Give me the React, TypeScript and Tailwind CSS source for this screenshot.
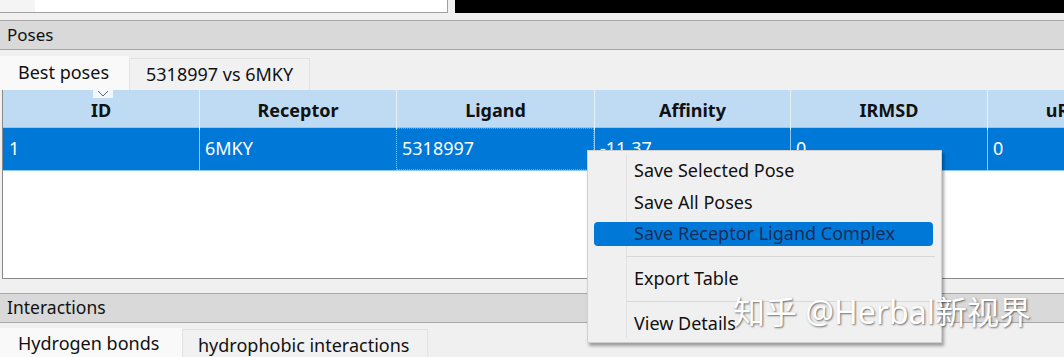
import React from "react";

const cols = ["ID", "Receptor", "Ligand", "Affinity", "IRMSD", "uRMSD"];
const row = ["1", "6MKY", "5318997", "-11.37", "0", "0"];

export default function App() {
  return (
    <div className="relative w-[1064px] h-[357px] overflow-hidden bg-[#f0f0f0] text-[#111] font-['Noto_Sans',sans-serif]">
      {/* top strip */}
      <div className="flex h-[13px]">
        <div className="w-[35px] bg-[#f4f4f4] border-b border-[#a0a0a0]" />
        <div className="w-[413px] bg-white border-b border-r border-[#a0a0a0]" />
        <div className="w-[7px]" />
        <div className="flex-1 bg-black" />
      </div>
      <div className="h-[7px]" />

      {/* Poses band */}
      <div className="h-[30px] border-y border-[#a6a6a6] bg-[#d9d9d9] pl-[7px] text-[17px] leading-[27px]">Poses</div>

      {/* tabs */}
      <div className="flex items-end h-[40px]">
        <div className="w-[129px] h-[34px] bg-[#f9f9f9] text-[18px] leading-[32px] pl-[18px]">Best poses</div>
        <div className="w-[181px] h-[32px] bg-[#f1f1f1] border border-b-0 border-[#e2e2e2] text-[18px] leading-[30px] pl-[16px]">5318997 vs 6MKY</div>
      </div>

      {/* table */}
      <div className="ml-[2px] h-[189px] bg-white border-l border-b border-[#8a8a8a] overflow-hidden">
        <div className="relative grid grid-cols-[196px_197px_198px_196px_197px_180px] h-[37px] bg-[#bfdbf3]">
          {cols.map((c, i) => (
            <div
              key={c}
              className={
                i === 0
                  ? "text-center text-[18px] font-bold leading-[40px]"
                  : "text-center text-[18px] font-bold leading-[40px] border-l border-[#e4f0fa]"
              }
            >
              {c}
            </div>
          ))}
          <div className="absolute left-[90px] top-0 w-[20px] h-[8px] bg-[#f3f7fb] flex justify-center">
            <svg width="12" height="7" viewBox="0 0 12 7">
              <path d="M1 1 L6 6 L11 1" fill="none" stroke="#666" strokeWidth="1" />
            </svg>
          </div>
        </div>
        <div className="grid grid-cols-[196px_197px_198px_196px_197px_180px] h-[44px] bg-[#0078d7] text-white border-y border-[#8fcaf5]">
          {row.map((v, i) => (
            <div
              key={i}
              className={
                i === 0
                  ? "pl-[6px] text-[18px] leading-[41px]"
                  : i === 2
                  ? "pl-[5px] text-[18px] leading-[39px] border border-dotted border-[#9a9a9a] border-l-[#8fcaf5]"
                  : "pl-[5px] text-[18px] leading-[41px] border-l border-[#8fcaf5]"
              }
            >
              {v}
            </div>
          ))}
        </div>
      </div>

      <div className="h-[14px]" />

      {/* Interactions band */}
      <div className="h-[30px] border-y border-[#a6a6a6] bg-[#d9d9d9] pl-[7px] text-[17.5px] leading-[27px]">Interactions</div>

      <div className="flex items-end h-[34px]">
        <div className="w-[182px] h-[29px] bg-[#f9f9f9] text-[18px] leading-[30px] pl-[18px]">Hydrogen bonds</div>
        <div className="w-[246px] h-[28px] bg-[#f1f1f1] border border-b-0 border-[#e2e2e2] text-[18px] leading-[30px] pl-[15px]">hydrophobic interactions</div>
      </div>

      {/* context menu */}
      <div className="absolute left-[587px] top-[150px] w-[355px] h-[193px] bg-[#f0f0f0] border border-[#d0d0d0] shadow-[2px_3px_3px_rgba(0,0,0,0.35)] text-[18px]">
        <div className="absolute left-[38px] top-[4px] bottom-[4px] border-l border-[#e2e2e2]" />
        <div className="relative flex flex-col pt-[3px] px-[6px]">
          <div className="h-[32px] leading-[32px] pl-[40px]">Save Selected Pose</div>
          <div className="h-[32px] leading-[32px] pl-[40px]">Save All Poses</div>
          <div className="h-[24px] leading-[23px] pl-[40px] my-[4px] rounded-[4px] bg-[#0078d7] text-[#1b2d57] w-[339px]">Save Receptor Ligand Complex</div>
          <div className="h-[12px] flex items-center pl-[32px]">
            <div className="w-full border-t border-[#d8d8d8]" />
          </div>
          <div className="h-[34px] leading-[32px] pl-[40px]">Export Table</div>
          <div className="h-[11px] flex items-center pl-[32px]">
            <div className="w-full border-t border-[#d8d8d8]" />
          </div>
          <div className="h-[34px] leading-[32px] pl-[40px]">View Details</div>
        </div>
      </div>

      {/* watermark */}
      <div className="absolute left-[733px] top-[293px] text-[32px] leading-[38px] text-white [text-shadow:1px_1px_2px_rgba(0,0,0,0.55)] font-['Noto_Sans','Noto_Sans_CJK_SC',sans-serif]">
        知乎 @Herbal新视界
      </div>
    </div>
  );
}
